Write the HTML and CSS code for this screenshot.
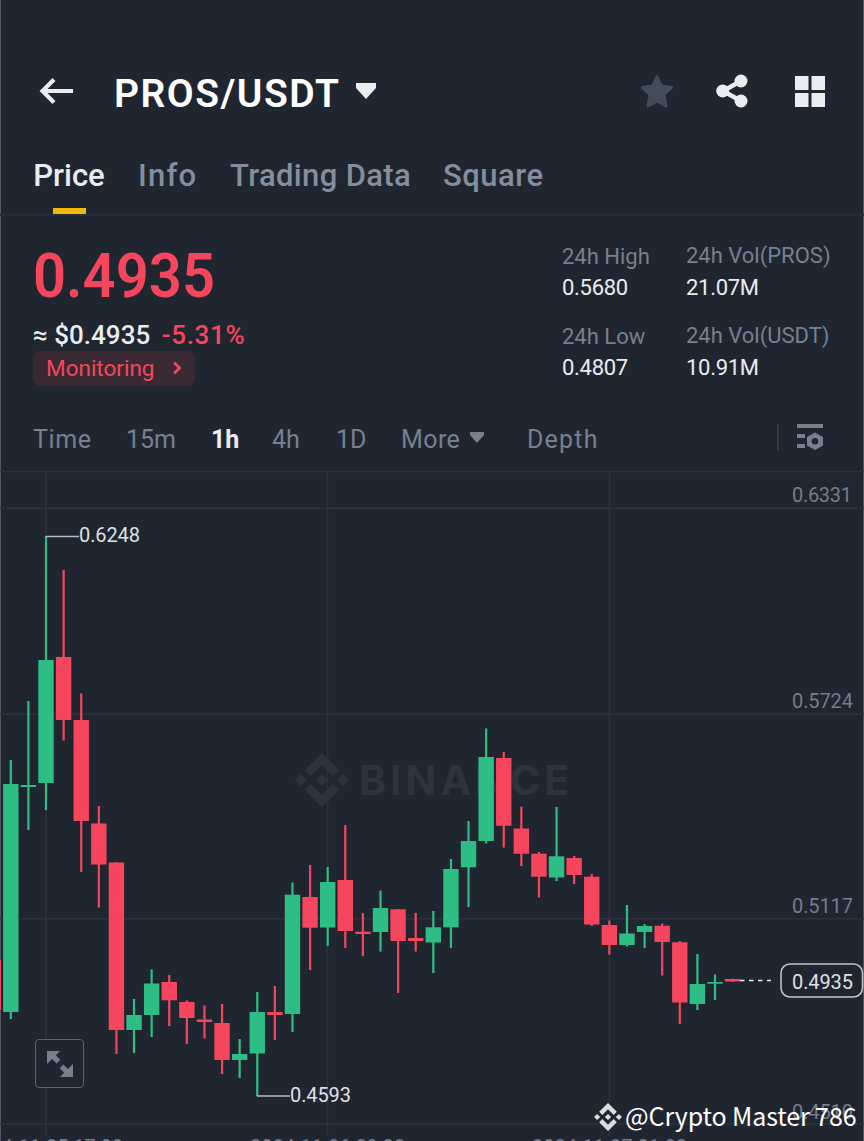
FILE: index.html
```html
<!DOCTYPE html>
<html lang="en">
<head>
    <meta charset="UTF-8">
    <meta name="viewport" content="width=device-width, initial-scale=1.0">
    <title>PROS/USDT</title>
    <link rel="stylesheet" href="styles.css">
</head>
<body>
    <header class="topbar">
        <svg class="back" width="36" height="30" viewBox="0 0 36 30"><path d="M35 15H4M16 3.500L4.500 15l11.500 11.500" fill="none" stroke="#eaecef" stroke-width="4.200"/></svg>
        <h1 class="pair">PROS/USDT</h1>
        <svg class="caret" width="22" height="17" viewBox="0 0 22 17"><path d="M1 0h20v5L11 16 1 5z" fill="#eaecef"/></svg>
        <div class="actions">
            <svg width="34" height="35" viewBox="0 0 34 35"><path d="M17 2.500l4.400 9.600 10.100 1.300-7.500 7.300 2 11.300-9-5-9 5 2-11.300-7.500-7.300 10.100-1.300z" fill="#434c5a" stroke="#434c5a" stroke-width="3" stroke-linejoin="round"/></svg>
            <svg class="share" width="32" height="34" viewBox="0 0 32 34"><path d="M25 7L7 17l18 10" fill="none" stroke="#eaecef" stroke-width="4.500"/><circle cx="25" cy="7" r="6.500" fill="#eaecef"/><circle cx="6.700" cy="17" r="6.500" fill="#eaecef"/><circle cx="25" cy="27" r="6.500" fill="#eaecef"/></svg>
            <svg width="30" height="31" viewBox="0 0 30 31"><path d="M0 0h13.500v14H0zM16.500 0H30v14H16.500zM0 17h13.500v14H0zM16.500 17H30v14H16.500z" fill="#eaecef"/></svg>
        </div>
    </header>

    <nav class="tabs">
        <a class="tab active">Price</a>
        <a class="tab info">Info</a>
        <a class="tab trading">Trading Data</a>
        <a class="tab square">Square</a>
    </nav>

    <section class="summary">
        <div class="quote">
            <div class="last-price">0.4935</div>
            <div class="fiat">≈ $0.4935 <span class="change">-5.31%</span></div>
            <div class="tag">Monitoring <svg width="10" height="14" viewBox="0 0 10 14"><path d="M2 1.500L7.500 7 2 12.500" fill="none" stroke="#f6465d" stroke-width="2.800"/></svg></div>
        </div>
        <dl class="stats">
            <div class="stat"><dt class="range">24h High</dt><dd>0.5680</dd></div>
            <div class="stat"><dt>24h Vol(PROS)</dt><dd>21.07M</dd></div>
            <div class="stat"><dt class="range">24h Low</dt><dd>0.4807</dd></div>
            <div class="stat"><dt>24h Vol(USDT)</dt><dd>10.91M</dd></div>
        </dl>
    </section>

    <nav class="intervals">
        <a class="time">Time</a>
        <a class="m15">15m</a>
        <a class="h1 active">1h</a>
        <a class="h4">4h</a>
        <a class="d1">1D</a>
        <a class="more">More</a>
        <svg class="more-caret" width="16" height="12" viewBox="0 0 16 12"><path d="M1 0h14v3L8 11 1 3z" fill="#76808f"/></svg>
        <a class="depth">Depth</a>
        <span class="divider"></span>
        <svg class="settings" width="27" height="28" viewBox="0 0 27 28"><path d="M0 1h26v4H0zM0 11h8v4H0zM0 21h8v4H0z" fill="#76808f"/><path d="M18 9.500l8 4.500v8.500L18 27l-8-4.500V14z" fill="#76808f"/><circle cx="18" cy="18.200" r="3.300" fill="#202630"/></svg>
    </nav>

    <main class="chart">
        <svg class="plot" width="864" height="670" viewBox="0 471 864 670">
            <g class="grid">
                <path d="M0 471.500H864M0 508.500H864M0 714H864M0 918.800H864M0 1124H864"/>
                <path d="M46 472V1136M327.500 472V1136M609.500 472V1136"/>
            </g>
            <g class="brand">
                <path d="M322 753l17 17-6 6-11-11-11 11-6-6zM322 807l17-17-6-6-11 11-11-11-6 6zM301 774l6 6-6 6-6-6zM343 774l6 6-6 6-6-6zM322 774l6 6-6 6-6-6z"/>
                <text x="359" y="795" textLength="210">BINANCE</text>
            </g>
            <g id="candles"></g>
            <path class="pointer" d="M46 536.500H79M257 1096H290"/>
            <path class="last-line" d="M740 980.500H771"/>
            <g class="extremes">
                <text x="79" y="542" textLength="61">0.6248</text>
                <text x="290" y="1102" textLength="61">0.4593</text>
            </g>
            <g class="axis">
                <text x="792" y="502" textLength="60">0.6331</text>
                <text x="792" y="708" textLength="61">0.5724</text>
                <text x="792" y="912.500" textLength="61">0.5117</text>
                <text x="792" y="1118.500" textLength="61">0.4510</text>
                <text x="-32" y="1153.500" textLength="155">2024-11-25 17:00</text>
                <text x="250" y="1153.500" textLength="155">2024-11-26 09:00</text>
                <text x="532" y="1153.500" textLength="155">2024-11-27 01:00</text>
            </g>
            <rect class="last-box" x="781" y="964" width="81.500" height="33" rx="9"/>
            <text class="last-label" x="792" y="988.500" textLength="61">0.4935</text>
        </svg>
        <button class="expand">
            <svg width="28" height="28" viewBox="0 0 28 28"><path d="M1 1h13l-4.200 4.200 4.500 4.500-3.700 3.700-4.500-4.500L1 14zM27 27H14l4.200-4.200-4.500-4.500 3.700-3.700 4.500 4.500L27 14z" fill="#76808f"/></svg>
        </button>
        <div class="credit">
            <svg width="28" height="28" viewBox="0 0 54 54"><path d="M27 0l17 17-6 6-11-11-11 11-6-6zM27 54l17-17-6-6-11 11-11-11-6 6zM6 21l6 6-6 6-6-6zM48 21l6 6-6 6-6-6zM27 21l6 6-6 6-6-6z" fill="#dcdddf"/></svg>
            <span class="author">@Crypto Master 786</span>
        </div>
    </main>

    <script>
        // Each candle: direction, high, body top, body bottom, low
        const candles = [
            ['up', 760, 784, 1012, 1019],
            ['up', 701, 785, 787, 830],
            ['up', 536, 660, 783, 810],
            ['down', 570, 657, 720, 740.5],
            ['down', 693.5, 720, 821, 872],
            ['down', 806, 823.5, 864.5, 907.5],
            ['down', 862, 862.5, 1030, 1054],
            ['up', 999, 1015, 1030, 1053],
            ['up', 969.5, 983.5, 1015, 1037],
            ['down', 975, 982, 1000.3, 1026],
            ['down', 1000.5, 1002, 1018, 1044],
            ['down', 1005.5, 1019.5, 1022, 1038.5],
            ['down', 1004, 1023, 1060, 1074],
            ['up', 1039, 1054, 1060, 1078],
            ['up', 992, 1012, 1053.5, 1096],
            ['down', 986, 1012, 1015, 1040],
            ['up', 882.5, 894.7, 1014, 1032],
            ['down', 865, 897, 927.7, 970],
            ['up', 867, 882, 927.5, 946],
            ['down', 825, 880, 931, 948],
            ['down', 913, 931.7, 934, 956],
            ['up', 890.5, 908, 932, 951.5],
            ['down', 909, 909.3, 941, 993],
            ['down', 913, 938, 941, 951.5],
            ['up', 911, 927.3, 942.5, 973],
            ['up', 859, 869, 927.3, 948],
            ['up', 821, 841, 867.3, 907],
            ['up', 728.5, 757, 841, 843.5],
            ['down', 752, 758, 825.7, 847.5],
            ['down', 806.5, 828.5, 853.7, 866],
            ['down', 852, 853.7, 876.7, 897.5],
            ['up', 807, 856.3, 877.5, 881],
            ['down', 856, 858, 875, 884],
            ['down', 874, 876.7, 924.5, 926],
            ['down', 920.5, 925, 945, 954.5],
            ['up', 905, 933.5, 945, 946.5],
            ['up', 924, 926, 932, 948],
            ['down', 923.5, 925.7, 942, 975.5],
            ['down', 941, 942.3, 1002.5, 1024],
            ['up', 954, 984, 1004, 1010],
            ['up', 974.5, 982, 983.7, 1000],
            ['down', 978.7, 979, 981.5, 982]
        ];

        // The first candle is cut off by the left edge
        let shapes = '<rect class="down" x="0" y="959.5" width="1" height="50.500"/>';
        candles.forEach(([dir, high, top, bottom, low], i) => {
            const x = 10.8 + i * 17.605;
            shapes += `<rect class="${dir}" x="${x - 1.1}" y="${high}" width="2.2" height="${low - high}"/>`;
            shapes += `<rect class="${dir}" x="${x - 7.7}" y="${top}" width="15.4" height="${bottom - top}"/>`;
        });
        document.getElementById('candles').innerHTML = shapes;
    </script>
</body>
</html>
```
FILE: styles.css
```css
/* General styles */
* {
    box-sizing: border-box;
}

body {
    margin: 0;
    width: 864px;
    height: 1141px;
    overflow: hidden;
    background-color: #202630;
    color: #eaecef;
    font-family: Roboto, "Liberation Sans", sans-serif;
    box-shadow: inset 1px 0 #50555f, inset -1px 0 #50555f;
}

svg {
    display: block;
    flex: none;
}

/* Header */
.topbar {
    display: flex;
    align-items: center;
    height: 142px;
    padding: 41px 40px 0 37px;
}

.back {
    margin: 0 -1px 1px 1px;
}

.pair {
    width: 226px;
    margin: 4px 0 0 41px;
    font-size: 39px;
    font-weight: 600;
    line-height: 48px;
    letter-spacing: 1.5px;
    color: #fff;
    white-space: nowrap;
}

.caret {
    margin: 0 0 1px 15px;
}

.actions {
    display: flex;
    align-items: center;
    width: 184px;
    margin-left: auto;
    gap: 46px;
}

.share {
    margin: 0 1px 1px -4px;
}

/* Tabs */
.tabs {
    display: flex;
    height: 74px;
    padding: 14px 0 0 34px;
    border-bottom: 2px solid #272d37;
    font-size: 31px;
    font-weight: 500;
    line-height: 40px;
    color: #848e9c;
}

.tab {
    white-space: nowrap;
}

.tab.active {
    display: flex;
    flex-direction: column;
    align-items: center;
    width: 70px;
    margin-right: 34px;
    color: #eaecef;
}

.tab.active::after {
    content: "";
    width: 33px;
    height: 7px;
    margin-top: 12px;
    background-color: #f0b90b;
}

.info {
    width: 92px;
    letter-spacing: 1.2px;
}

.trading {
    width: 213px;
    letter-spacing: 0.35px;
}

.square {
    letter-spacing: 0.5px;
}

/* Price summary */
.summary {
    display: flex;
    justify-content: space-between;
    height: 188px;
    padding: 24px 32px 0 33px;
}

.last-price {
    width: 190px;
    height: 76px;
    font-size: 62px;
    font-weight: 600;
    line-height: 72px;
    color: #f6465d;
    transform: scaleX(0.935);
    transform-origin: left;
}

.fiat {
    height: 35px;
    font-size: 26px;
    font-weight: 500;
    line-height: 38px;
    white-space: nowrap;
}

.change {
    margin-left: 5px;
    letter-spacing: 0.7px;
    color: #f6465d;
}

.tag {
    display: flex;
    align-items: center;
    justify-content: space-between;
    width: 162px;
    height: 35px;
    padding: 0 13px 1px 13px;
    border-radius: 8px;
    background-color: #382932;
    font-size: 22.5px;
    color: #f6465d;
}

.stats {
    display: grid;
    grid-template-columns: 124px 146px;
    grid-auto-rows: 80px;
    margin: 0;
}

.stat dt {
    font-size: 22px;
    line-height: 32px;
    white-space: nowrap;
    color: #76808f;
}

.stat .range {
    padding-top: 1px;
    margin-bottom: -1px;
}

.stat dd {
    margin: 0;
    font-size: 22px;
    line-height: 32px;
    letter-spacing: -0.3px;
}

/* Interval bar */
.intervals {
    display: flex;
    align-items: center;
    height: 67px;
    padding-left: 33px;
    font-size: 25px;
    color: #76808f;
}

.intervals a {
    padding-top: 3px;
}

.intervals .active {
    font-weight: 700;
    color: #eaecef;
}

.time {
    width: 93px;
    letter-spacing: 0.6px;
}

.m15 {
    width: 85px;
}

.h1 {
    width: 61px;
}

.h4 {
    width: 64px;
}

.d1 {
    width: 65px;
}

.more {
    width: 68px;
    letter-spacing: 0.4px;
}

.depth {
    margin-left: 42px;
    letter-spacing: 1.2px;
}

.divider {
    width: 2px;
    height: 27px;
    margin: 0 18px 0 auto;
    background-color: #343a45;
}

.settings {
    margin: 0 40px 2px 0;
}

/* Chart */
.chart {
    position: relative;
    height: 670px;
}

.grid path {
    stroke: #2c323d;
    stroke-width: 1.6;
}

.brand {
    fill: #2e333e;
    font-family: Inter, sans-serif;
    font-size: 41px;
    font-weight: 700;
}

.up {
    fill: #2ebd85;
}

.down {
    fill: #f6465d;
}

.pointer {
    stroke: #b7bac0;
    stroke-width: 1.6;
}

.last-line {
    stroke: #eaecef;
    stroke-width: 1.3;
    stroke-dasharray: 4.5 4.5;
}

.extremes,
.last-label {
    fill: #dfe1e5;
    font-size: 20px;
}

.axis {
    fill: #757c8a;
    font-size: 20px;
}

.last-box {
    fill: #202630;
    stroke: #c3c6cb;
    stroke-width: 1.5;
}

.expand {
    position: absolute;
    left: 35px;
    top: 568px;
    display: flex;
    align-items: center;
    justify-content: center;
    width: 49px;
    height: 49px;
    padding: 0;
    border: 1.5px solid #5b6270;
    border-radius: 4px;
    background-color: #202630;
}

.credit {
    position: absolute;
    left: 594px;
    top: 629px;
    display: flex;
    align-items: center;
    gap: 3px;
    font-family: "Noto Sans CJK SC", sans-serif;
    font-size: 25px;
    line-height: 36px;
    white-space: nowrap;
    color: #fff;
}

.author {
    margin-top: -3px;
    letter-spacing: -0.1px;
}
```
